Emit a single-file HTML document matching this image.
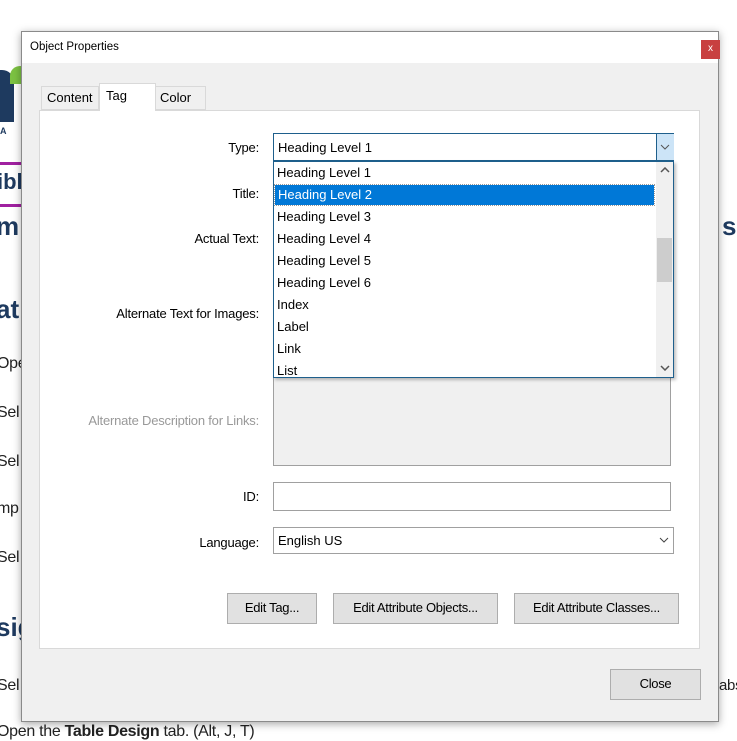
<!DOCTYPE html>
<html><head><meta charset="utf-8"><style>
body{margin:0;width:737px;height:741px;position:relative;overflow:hidden;background:#fff;font-family:"Liberation Sans",sans-serif;font-size:13px;color:#000}
.a{position:absolute}
.bg{color:#1e3a5f;font-weight:bold;font-size:26px}
.bt{color:#222;font-size:16px;letter-spacing:-0.3px}
.lbl{position:absolute;right:478px;text-align:right;white-space:nowrap;letter-spacing:-0.2px}
.box{position:absolute;border:1px solid #7a7a7a;background:#fff;box-sizing:border-box}
.btn{position:absolute;background:#e1e1e1;border:1px solid #adadad;box-sizing:border-box;text-align:center;line-height:28px;letter-spacing:-0.3px}
.it{height:22px;line-height:22px;padding-left:3px}
</style></head><body>
<div class="a" style="left:-14px;top:70px;width:28px;height:52px;background:#1e3a5f;border-radius:12px 12px 0 0"></div>
<div class="a" style="left:10px;top:66px;width:20px;height:18px;background:#7cc242;border-radius:20px 20px 0 0"></div>
<div class="a" style="left:0;top:126px;font-size:9px;color:#1e3a5f;font-weight:bold">A</div>
<div class="a" style="left:0;top:162px;width:21px;height:3px;background:#a020a0"></div>
<div class="a bg" style="left:-3px;top:169px;font-size:22px">ibl</div>
<div class="a" style="left:0;top:204px;width:21px;height:3px;background:#a020a0"></div>
<div class="a bg" style="left:-4px;top:211px">m</div>
<div class="a bg" style="left:-4px;top:294px">at</div>
<div class="a bt" style="left:-3px;top:355px">Ope</div>
<div class="a bt" style="left:-3px;top:404px">Sel</div>
<div class="a bt" style="left:-3px;top:453px">Sel</div>
<div class="a bt" style="left:-3px;top:500px">mp</div>
<div class="a bt" style="left:-3px;top:549px">Sel</div>
<div class="a bg" style="left:-4px;top:612px">sig</div>
<div class="a bt" style="left:-3px;top:677px">Sel</div>
<div class="a bg" style="left:722px;top:211px">s</div>
<div class="a bt" style="left:719px;top:677px;font-size:15px">abs</div>
<div class="a bt" style="left:-3px;top:723px">Open the <b>Table Design</b> tab. (Alt, J, T)</div>
<div class="a" style="left:21px;top:31px;width:698px;height:691px;background:#f0f0f0;border:1px solid #8a8a8a;box-sizing:border-box;box-shadow:0 2px 8px rgba(0,0,0,.35)">
 <div class="a" style="left:0;top:0;width:696px;height:31px;background:#fff"></div>
 <div class="a" style="left:8px;top:9px;font-size:11.5px">Object Properties</div>
 <div class="a" style="left:679px;top:8px;width:19px;height:19px;background:#c84040;color:#fff;font-size:10px;text-align:center;line-height:18px">x</div>
</div>
<div class="a" style="left:41px;top:86px;width:58px;height:24px;background:#f0f0f0;border:1px solid #d9d9d9;box-sizing:border-box"></div>
<div class="a" style="left:47px;top:90px">Content</div>
<div class="a" style="left:155px;top:86px;width:51px;height:24px;background:#f0f0f0;border:1px solid #d9d9d9;box-sizing:border-box"></div>
<div class="a" style="left:160px;top:90px">Color</div>
<div class="a" style="left:39px;top:110px;width:661px;height:539px;background:#fff;border:1px solid #d9d9d9;box-sizing:border-box"></div>
<div class="a" style="left:99px;top:83px;width:57px;height:28px;background:#fff;border:1px solid #d9d9d9;border-bottom:none;box-sizing:border-box"></div>
<div class="a" style="left:106px;top:88px">Tag</div>
<div class="lbl" style="top:140px">Type:</div>
<div class="lbl" style="top:186px">Title:</div>
<div class="lbl" style="top:231px">Actual Text:</div>
<div class="lbl" style="top:306px">Alternate Text for Images:</div>
<div class="lbl" style="top:413px;color:#999">Alternate Description for Links:</div>
<div class="lbl" style="top:489px">ID:</div>
<div class="lbl" style="top:535px">Language:</div>
<div class="box" style="left:273px;top:355px;width:398px;height:111px;background:#f0f0f0;border-color:#a0a0a0"></div>
<div class="box" style="left:273px;top:482px;width:398px;height:29px;border-color:#a0a0a0"></div>
<div class="box" style="left:273px;top:527px;width:401px;height:27px;border-color:#a0a0a0;padding:5px 0 0 4px">English US</div>
<svg class="a" style="left:659px;top:537px" width="10" height="6"><path d="M1 1L5 5L9 1" fill="none" stroke="#444"/></svg>
<div class="box" style="left:273px;top:133px;width:401px;height:28px;border-color:#1e5f8c;padding:6px 0 0 4px">Heading Level 1</div>
<div class="a" style="left:656px;top:134px;width:17px;height:26px;background:#cce4f7;border-left:1px solid #1e5f8c"></div>
<svg class="a" style="left:660px;top:144px" width="10" height="6"><path d="M1 1L5 5L9 1" fill="none" stroke="#555"/></svg>
<div class="box" style="left:273px;top:161px;width:401px;height:217px;border-color:#1e5f8c;overflow:hidden;box-shadow:2px 2px 3px rgba(0,0,0,.25)">
 <div class="it">Heading Level 1</div>
 <div class="it" style="background:#0078d7;color:#fff;width:376px;margin-left:1px;height:20px;line-height:20px;outline:1px dotted #999;margin-top:1px;margin-bottom:1px">Heading Level 2</div>
 <div class="it">Heading Level 3</div>
 <div class="it">Heading Level 4</div>
 <div class="it">Heading Level 5</div>
 <div class="it">Heading Level 6</div>
 <div class="it">Index</div>
 <div class="it">Label</div>
 <div class="it">Link</div>
 <div class="it">List</div>
 <div class="a" style="left:382px;top:0;width:17px;height:215px;background:#f0f0f0"></div>
 <div class="a" style="left:383px;top:76px;width:15px;height:44px;background:#cdcdcd"></div>
</div>
<svg class="a" style="left:660px;top:167px" width="10" height="6"><path d="M1 5L5 1L9 5" fill="none" stroke="#555" stroke-width="1.5"/></svg>
<svg class="a" style="left:660px;top:365px" width="10" height="6"><path d="M1 1L5 5L9 1" fill="none" stroke="#555" stroke-width="1.5"/></svg>
<div class="btn" style="left:227px;top:593px;width:90px;height:31px">Edit Tag...</div>
<div class="btn" style="left:333px;top:593px;width:165px;height:31px">Edit Attribute Objects...</div>
<div class="btn" style="left:514px;top:593px;width:165px;height:31px">Edit Attribute Classes...</div>
<div class="btn" style="left:610px;top:669px;width:91px;height:31px">Close</div>
</body></html>
